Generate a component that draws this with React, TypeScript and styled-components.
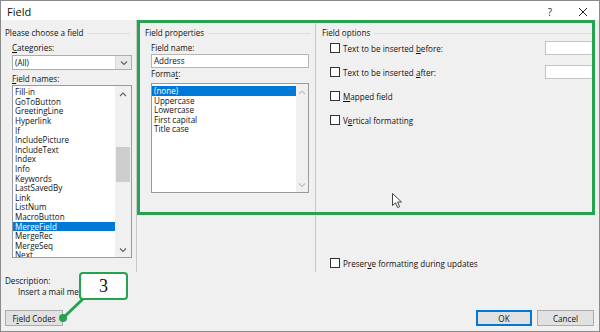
import React from 'react';
import styled, { createGlobalStyle } from 'styled-components';

const GlobalStyle = createGlobalStyle`
  html, body {
    margin: 0;
    padding: 0;
    background: #ffffff;
  }
  body {
    font-family: "Open Sans", "Noto Sans", sans-serif;
    color: #111;
  }
`;

const GREEN = '#25a350';

const fieldNames = [
  'Fill-in',
  'GoToButton',
  'GreetingLine',
  'Hyperlink',
  'If',
  'IncludePicture',
  'IncludeText',
  'Index',
  'Info',
  'Keywords',
  'LastSavedBy',
  'Link',
  'ListNum',
  'MacroButton',
  'MergeField',
  'MergeRec',
  'MergeSeq',
  'Next',
];

const formats = ['(none)', 'Uppercase', 'Lowercase', 'First capital', 'Title case'];

const Chevron: React.FC<{ up?: boolean; color?: string }> = ({ up, color = '#606060' }) => (
  <svg width="8" height="6" viewBox="0 0 8 6">
    <polyline
      points={up ? '1,5 4,2 7,5' : '1,1.5 4,4.5 7,1.5'}
      fill="none"
      stroke={color}
      strokeWidth="1.1"
    />
  </svg>
);

const App: React.FC = () => {
  return (
    <>
      <GlobalStyle />
      <Window>
        <TitleBar>
          <span>Field</span>
          <TitleButtons>
            <HelpMark>?</HelpMark>
            <svg width="10" height="10" viewBox="0 0 10 10">
              <path d="M1 1 L9 9 M9 1 L1 9" stroke="#222" strokeWidth="1" />
            </svg>
          </TitleButtons>
        </TitleBar>

        <Body>
          <Columns>
            <Column $width={136} $pl={4} $sep>
              <GroupHeader $mr={6}>Please choose a field</GroupHeader>
              <Indent $pl={7}>
                <FieldLabel $mt={5}>
                  <u>C</u>ategories:
                </FieldLabel>
                <Combo $mt={2}>
                  <ComboText>(All)</ComboText>
                  <DropButton>
                    <Chevron />
                  </DropButton>
                </Combo>
                <FieldLabel $mt={4}>
                  <u>F</u>ield names:
                </FieldLabel>
                <ListBox $w={120} $h={173} $mt={1}>
                  <ListItems $pt={1.2}>
                    {fieldNames.map((n) => (
                      <ListItem key={n} $selected={n === 'MergeField'}>
                        {n}
                      </ListItem>
                    ))}
                  </ListItems>
                  <ScrollBar $w={16}>
                    <ArrowCell>
                      <Chevron up />
                    </ArrowCell>
                    <Track>
                      <Thumb $top={46} $h={35} />
                    </Track>
                    <ArrowCell>
                      <Chevron />
                    </ArrowCell>
                  </ScrollBar>
                </ListBox>
              </Indent>
            </Column>

            <Column $width={179} $pl={8} $sep>
              <GroupHeader $mr={5}>Field properties</GroupHeader>
              <Indent $pl={6}>
                <FieldLabel $mt={5}>Field name:</FieldLabel>
                <TextInput $w={158} $mt={1}>Address</TextInput>
                <FieldLabel $mt={1}>
                  Forma<u>t</u>:
                </FieldLabel>
                <ListBox $w={158} $h={110} $mt={4}>
                  <ListItems $pt={2}>
                    {formats.map((f) => (
                      <ListItem key={f} $selected={f === '(none)'}>
                        {f}
                      </ListItem>
                    ))}
                  </ListItems>
                  <ScrollBar $w={12}>
                    <ArrowCell>
                      <Chevron up color="#c0c0c0" />
                    </ArrowCell>
                    <Track />
                    <ArrowCell>
                      <Chevron color="#c0c0c0" />
                    </ArrowCell>
                  </ScrollBar>
                </ListBox>
              </Indent>
            </Column>

            <Column $pl={6} $pr={4}>
              <GroupHeader $mr={0}>Field options</GroupHeader>
              <Indent $pl={8}>
                <OptionList>
                  <OptionRow>
                    <CheckBox />
                    <span>
                      Text to be inserted <u>b</u>efore:
                    </span>
                    <SideInput />
                  </OptionRow>
                  <OptionRow>
                    <CheckBox />
                    <span>
                      Text to be inserted <u>a</u>fter:
                    </span>
                    <SideInput />
                  </OptionRow>
                  <OptionRow>
                    <CheckBox />
                    <span>
                      <u>M</u>apped field
                    </span>
                  </OptionRow>
                  <OptionRow>
                    <CheckBox />
                    <span>
                      V<u>e</u>rtical formatting
                    </span>
                  </OptionRow>
                </OptionList>
              </Indent>
              <BottomOption>
                <OptionRow>
                  <CheckBox />
                  <span>
                    Preser<u>v</u>e formatting during updates
                  </span>
                </OptionRow>
              </BottomOption>
            </Column>
          </Columns>

          <Footer>
            <FieldLabel $mt={0}>Description:</FieldLabel>
            <DescText>Insert a mail merge field</DescText>
            <ButtonRow>
              <Button $w={58}>
                F<u>i</u>eld Codes
              </Button>
              <RightButtons>
                <Button $w={56} $primary>
                  OK
                </Button>
                <Button $w={57}>Cancel</Button>
              </RightButtons>
            </ButtonRow>
          </Footer>
        </Body>

        {/* annotations drawn over the dialog */}
        <Highlight />
        <Connector width="40" height="32" viewBox="0 0 40 32">
          <line x1="6" y1="26" x2="28" y2="5" stroke={GREEN} strokeWidth="3" />
          <circle cx="6" cy="26" r="4" fill={GREEN} />
        </Connector>
        <Callout>3</Callout>
        <Cursor width="11" height="16" viewBox="0 0 11 16">
          <path
            d="M0.5 0.5 L0.5 12.5 L3.5 9.8 L5.6 14.6 L7.6 13.7 L5.6 9 L9.5 9 Z"
            fill="#fff"
            stroke="#444"
            strokeWidth="1"
            strokeLinejoin="round"
          />
        </Cursor>
      </Window>
    </>
  );
};

export default App;

const Window = styled.div`
  position: relative;
  width: 600px;
  height: 332px;
  box-sizing: border-box;
  border: 1px solid #8a8a8a;
  display: flex;
  flex-direction: column;
  overflow: hidden;
  font-size: 8.1px;
`;

const TitleBar = styled.div`
  height: 19px;
  flex: none;
  background: #ffffff;
  display: flex;
  align-items: center;
  padding: 2px 0 0 6px;
  box-sizing: border-box;
  font-size: 11px;
`;

const TitleButtons = styled.div`
  margin-left: auto;
  margin-right: 11px;
  display: flex;
  align-items: center;
  gap: 26px;
`;

const HelpMark = styled.span`
  font-size: 10px;
  color: #333;
`;

const Body = styled.div`
  flex: 1;
  background: #f0f0f0;
  display: flex;
  flex-direction: column;
`;

const Columns = styled.div`
  display: flex;
  height: 252px;
`;

const Column = styled.div<{ $width?: number; $pl: number; $pr?: number; $sep?: boolean }>`
  box-sizing: border-box;
  ${(p) => (p.$width ? `width: ${p.$width}px; flex: none;` : 'flex: 1;')}
  padding: 8px ${(p) => p.$pr || 0}px 0 ${(p) => p.$pl}px;
  border-right: ${(p) => (p.$sep ? '1px solid #c9c9c9' : 'none')};
  display: flex;
  flex-direction: column;
`;

const GroupHeader = styled.div<{ $mr: number }>`
  height: 10px;
  line-height: 10px;
  display: flex;
  align-items: center;
  margin-right: ${(p) => p.$mr}px;
  white-space: nowrap;

  &::after {
    content: '';
    flex: 1;
    height: 1px;
    background: #dcdcdc;
    margin-left: 4px;
  }
`;

const Indent = styled.div<{ $pl: number }>`
  padding-left: ${(p) => p.$pl}px;
  display: flex;
  flex-direction: column;
`;

const FieldLabel = styled.div<{ $mt: number }>`
  height: 10px;
  line-height: 10px;
  margin-top: ${(p) => p.$mt}px;
  white-space: nowrap;
`;

const Combo = styled.div<{ $mt: number }>`
  margin-top: ${(p) => p.$mt}px;
  width: 120px;
  height: 15px;
  box-sizing: border-box;
  border: 1px solid #acacac;
  background: #fff;
  display: flex;
`;

const ComboText = styled.div`
  flex: 1;
  padding-left: 2px;
  line-height: 13px;
`;

const DropButton = styled.div`
  width: 15px;
  background: #e9e9e9;
  border-left: 1px solid #dadada;
  display: flex;
  align-items: center;
  justify-content: center;
`;

const TextInput = styled.div<{ $w: number; $mt: number }>`
  margin-top: ${(p) => p.$mt}px;
  width: ${(p) => p.$w}px;
  height: 14px;
  box-sizing: border-box;
  border: 1px solid #b5b5b5;
  background: #fff;
  padding-left: 2px;
  line-height: 12px;
`;

const ListBox = styled.div<{ $w: number; $h: number; $mt: number }>`
  margin-top: ${(p) => p.$mt}px;
  width: ${(p) => p.$w}px;
  height: ${(p) => p.$h}px;
  box-sizing: border-box;
  border: 1px solid #9a9a9a;
  background: #fff;
  display: flex;
  overflow: hidden;
`;

const ListItems = styled.div<{ $pt: number }>`
  flex: 1;
  padding-top: ${(p) => p.$pt}px;
  overflow: hidden;
`;

const ListItem = styled.div<{ $selected?: boolean }>`
  height: 9.6px;
  line-height: 9.6px;
  padding-left: 2px;
  white-space: nowrap;
  background: ${(p) => (p.$selected ? '#0078d7' : 'transparent')};
  color: ${(p) => (p.$selected ? '#ffffff' : '#111111')};
`;

const ScrollBar = styled.div<{ $w: number }>`
  width: ${(p) => p.$w}px;
  flex: none;
  background: #f0f0f0;
  display: flex;
  flex-direction: column;
`;

const ArrowCell = styled.div`
  height: 15px;
  display: flex;
  align-items: center;
  justify-content: center;
`;

const Track = styled.div`
  flex: 1;
`;

const Thumb = styled.div<{ $top: number; $h: number }>`
  margin: ${(p) => p.$top}px 1px 0;
  height: ${(p) => p.$h}px;
  background: #cdcdcd;
`;

const OptionList = styled.div`
  margin-top: 3px;
  display: flex;
  flex-direction: column;
  gap: 10px;
`;

const OptionRow = styled.div`
  height: 14px;
  display: flex;
  align-items: center;
  white-space: nowrap;
`;

const CheckBox = styled.div`
  width: 10px;
  height: 10px;
  box-sizing: border-box;
  border: 1px solid #333;
  background: #fff;
  margin-right: 3px;
  flex: none;
`;

const SideInput = styled.div`
  margin-left: auto;
  width: 50px;
  height: 14px;
  box-sizing: border-box;
  border: 1px solid #c4c4c4;
  background: #fff;
`;

const BottomOption = styled.div`
  margin-top: auto;
  margin-bottom: 2px;
  padding-left: 8px;
`;

const Footer = styled.div`
  flex: 1;
  display: flex;
  flex-direction: column;
  padding: 4px 5px 5px 4px;
`;

const DescText = styled.div`
  margin-top: 1px;
  padding-left: 13px;
  height: 10px;
  line-height: 10px;
`;

const ButtonRow = styled.div`
  margin-top: auto;
  display: flex;
  justify-content: space-between;
  align-items: flex-end;
`;

const RightButtons = styled.div`
  display: flex;
  gap: 5px;
`;

const Button = styled.div<{ $w: number; $primary?: boolean }>`
  width: ${(p) => p.$w}px;
  height: 16px;
  box-sizing: border-box;
  background: #e1e1e1;
  border: 1px solid ${(p) => (p.$primary ? '#0078d7' : '#adadad')};
  box-shadow: ${(p) => (p.$primary ? 'inset 0 0 0 1px #0078d7' : 'none')};
  display: flex;
  align-items: center;
  justify-content: center;
  white-space: nowrap;
`;

const Highlight = styled.div`
  position: absolute;
  left: 136px;
  top: 19px;
  width: 458px;
  height: 195px;
  box-sizing: border-box;
  border: 3px solid ${GREEN};
  pointer-events: none;
`;

const Callout = styled.div`
  position: absolute;
  left: 78px;
  top: 271px;
  width: 49px;
  height: 28px;
  box-sizing: border-box;
  background: #fff;
  border: 2.5px solid ${GREEN};
  border-radius: 4px;
  display: flex;
  align-items: center;
  justify-content: center;
  font-family: "Liberation Serif", "DejaVu Serif", serif;
  font-size: 18px;
`;

const Connector = styled.svg`
  position: absolute;
  left: 56px;
  top: 291px;
`;

const Cursor = styled.svg`
  position: absolute;
  left: 391px;
  top: 192px;
`;
